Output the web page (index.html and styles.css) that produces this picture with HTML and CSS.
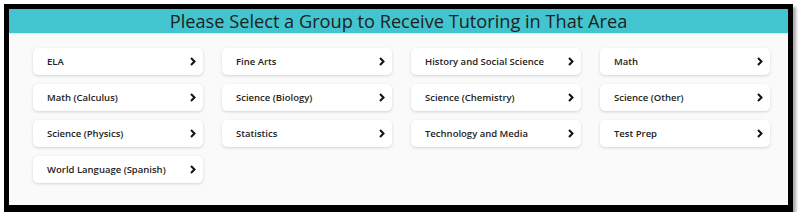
FILE: index.html
```html
<!DOCTYPE html>
<html lang="en">
  <head>
    <meta charset="UTF-8" />
    <meta name="viewport" content="width=device-width, initial-scale=1.0" />
    <title>Tutoring Groups</title>
    <link rel="stylesheet" href="styles.css">
  </head>
  <body>
    <div class="frame">
      <div class="header">Please Select a Group to Receive Tutoring in That Area</div>
      <div class="groups">
        <a class="group" href="#">ELA <svg class="chev" viewBox="0 0 6 9"><polyline points="1,1 4.5,4.5 1,8" /></svg></a>
        <a class="group" href="#">Fine Arts <svg class="chev" viewBox="0 0 6 9"><polyline points="1,1 4.5,4.5 1,8" /></svg></a>
        <a class="group" href="#">History and Social Science <svg class="chev" viewBox="0 0 6 9"><polyline points="1,1 4.5,4.5 1,8" /></svg></a>
        <a class="group" href="#">Math <svg class="chev" viewBox="0 0 6 9"><polyline points="1,1 4.5,4.5 1,8" /></svg></a>
        <a class="group" href="#">Math (Calculus) <svg class="chev" viewBox="0 0 6 9"><polyline points="1,1 4.5,4.5 1,8" /></svg></a>
        <a class="group" href="#">Science (Biology) <svg class="chev" viewBox="0 0 6 9"><polyline points="1,1 4.5,4.5 1,8" /></svg></a>
        <a class="group" href="#">Science (Chemistry) <svg class="chev" viewBox="0 0 6 9"><polyline points="1,1 4.5,4.5 1,8" /></svg></a>
        <a class="group" href="#">Science (Other) <svg class="chev" viewBox="0 0 6 9"><polyline points="1,1 4.5,4.5 1,8" /></svg></a>
        <a class="group" href="#">Science (Physics) <svg class="chev" viewBox="0 0 6 9"><polyline points="1,1 4.5,4.5 1,8" /></svg></a>
        <a class="group" href="#">Statistics <svg class="chev" viewBox="0 0 6 9"><polyline points="1,1 4.5,4.5 1,8" /></svg></a>
        <a class="group" href="#">Technology and Media <svg class="chev" viewBox="0 0 6 9"><polyline points="1,1 4.5,4.5 1,8" /></svg></a>
        <a class="group" href="#">Test Prep <svg class="chev" viewBox="0 0 6 9"><polyline points="1,1 4.5,4.5 1,8" /></svg></a>
        <a class="group" href="#">World Language (Spanish) <svg class="chev" viewBox="0 0 6 9"><polyline points="1,1 4.5,4.5 1,8" /></svg></a>
      </div>
    </div>
  </body>
</html>
```
FILE: styles.css
```css
body {
  margin: 0;
  padding: 4px 12px 0 4px;
  background: white;
  font-family: "Open Sans", "Liberation Sans", sans-serif;
}
.frame {
  height: 196px;
  border: 5px solid #000;
  border-bottom-width: 7px;
  background-color: #fafafa;
  box-shadow: 3px 3px 3px rgba(0, 0, 0, 0.35);
}
.header {
  height: 24px;
  line-height: 24px;
  background-color: #42c5cf;
  color: #1e1e1e;
  text-align: center;
  font-size: 18.2px;
  box-shadow: 0 1px 1px rgba(0, 0, 0, 0.08);
}
.groups {
  display: grid;
  grid-template-columns: repeat(4, 170px);
  grid-auto-rows: 27px;
  column-gap: 19px;
  row-gap: 9px;
  padding: 15px 0 0 24px;
}
.group {
  display: flex;
  align-items: center;
  justify-content: space-between;
  padding: 0 7px 0 14px;
  background-color: white;
  border-radius: 5px;
  box-shadow: 0 1px 3px rgba(0, 0, 0, 0.16);
  color: #222;
  text-decoration: none;
  font-size: 9.5px;
  font-weight: 600;
}
.chev {
  width: 6px;
  height: 9px;
  fill: none;
  stroke: #111;
  stroke-width: 2;
}
```
